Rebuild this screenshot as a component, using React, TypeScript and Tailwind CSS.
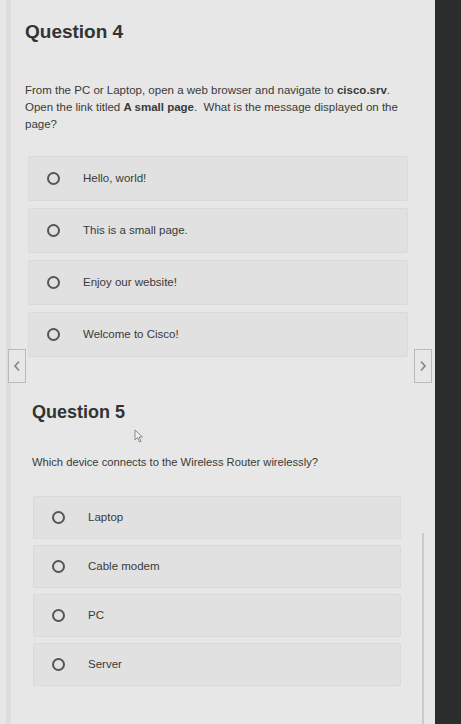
import React from "react";

const font = { fontFamily: '"Liberation Sans", Arial, sans-serif' };

type OptionProps = { label: string; className: string };

function Option({ label, className }: OptionProps) {
  return (
    <div
      className={`flex items-center rounded-[2px] border border-[#d9dad9] bg-[#e0e1e0] ${className}`}
    >
      <span className="ml-[18px] h-[13px] w-[13px] shrink-0 rounded-full border-[2px] border-[#555]" />
      <span className="ml-[23px] text-[11.5px] text-[#3a3a3a]">{label}</span>
    </div>
  );
}

function NavButton({ dir }: { dir: "left" | "right" }) {
  return (
    <button
      className={`absolute top-[2px] flex h-[34px] w-[18px] items-center justify-center border border-[#b9bbb8] bg-[#e6e7e6] ${
        dir === "left" ? "left-[8px]" : "right-[3px]"
      }`}
    >
      <svg width="8" height="12" viewBox="0 0 8 12" fill="none">
        <path
          d={dir === "left" ? "M6 1.5 L2 6 L6 10.5" : "M2 1.5 L6 6 L2 10.5"}
          stroke="#7f8a7c"
          strokeWidth="1.6"
        />
      </svg>
    </button>
  );
}

export default function App() {
  const q4 = ["Hello, world!", "This is a small page.", "Enjoy our website!", "Welcome to Cisco!"];
  const q5 = ["Laptop", "Cable modem", "PC", "Server"];

  return (
    <div className="flex h-[724px] w-[461px] overflow-hidden bg-[#e5e6e5]" style={font}>
      <main className="relative flex w-[435px] shrink-0 flex-col bg-[#e6e7e6]">
        <div className="absolute left-[6px] top-0 h-full w-[5px] bg-[#dcdddc]" />
        <div className="absolute left-[422px] top-[533px] h-[191px] w-[2px] bg-[#c9cac9]" />

        <section className="relative pl-[25px] pt-[18px]">
          <h2 className="text-[19px] font-bold leading-[28px] text-[#333]">Question 4</h2>
          <p className="mt-[36px] w-[385px] text-[11.5px] leading-[17px] text-[#3a3a3a]">
            From the PC or Laptop, open a web browser and navigate to <b>cisco.srv</b>. Open the
            link titled <b>A small page</b>.&nbsp; What is the message displayed on the page?
          </p>
        </section>

        <div className="ml-[28px] mt-[23px] flex w-[380px] flex-col gap-[7px]">
          {q4.map((o) => (
            <Option key={o} label={o} className="h-[45px]" />
          ))}
        </div>

        <div className="relative -mt-[10px] h-[34px]">
          <NavButton dir="left" />
          <NavButton dir="right" />
        </div>

        <section className="relative pl-[32px] pt-[18px]">
          <h2 className="text-[18px] font-bold leading-[26px] text-[#333]">Question 5</h2>
          <svg
            className="absolute left-[134px] top-[48px]"
            width="10"
            height="14"
            viewBox="0 0 10 14"
            fill="none"
          >
            <path d="M1 1 L1 11 L3.5 8.5 L5.5 13 L7 12.3 L5 8 L8.5 8 Z" fill="#f2f2f2" stroke="#8a8a8a" strokeWidth="1" />
          </svg>
          <p className="mt-[29px] text-[11.2px] leading-[16px] text-[#3a3a3a]">
            Which device connects to the Wireless Router wirelessly?
          </p>
        </section>

        <div className="ml-[33px] mt-[26px] flex w-[368px] flex-col gap-[6px]">
          {q5.map((o) => (
            <Option key={o} label={o} className="h-[43px]" />
          ))}
        </div>
      </main>
      <div className="flex-1 bg-[#2b2c2c]" />
    </div>
  );
}
